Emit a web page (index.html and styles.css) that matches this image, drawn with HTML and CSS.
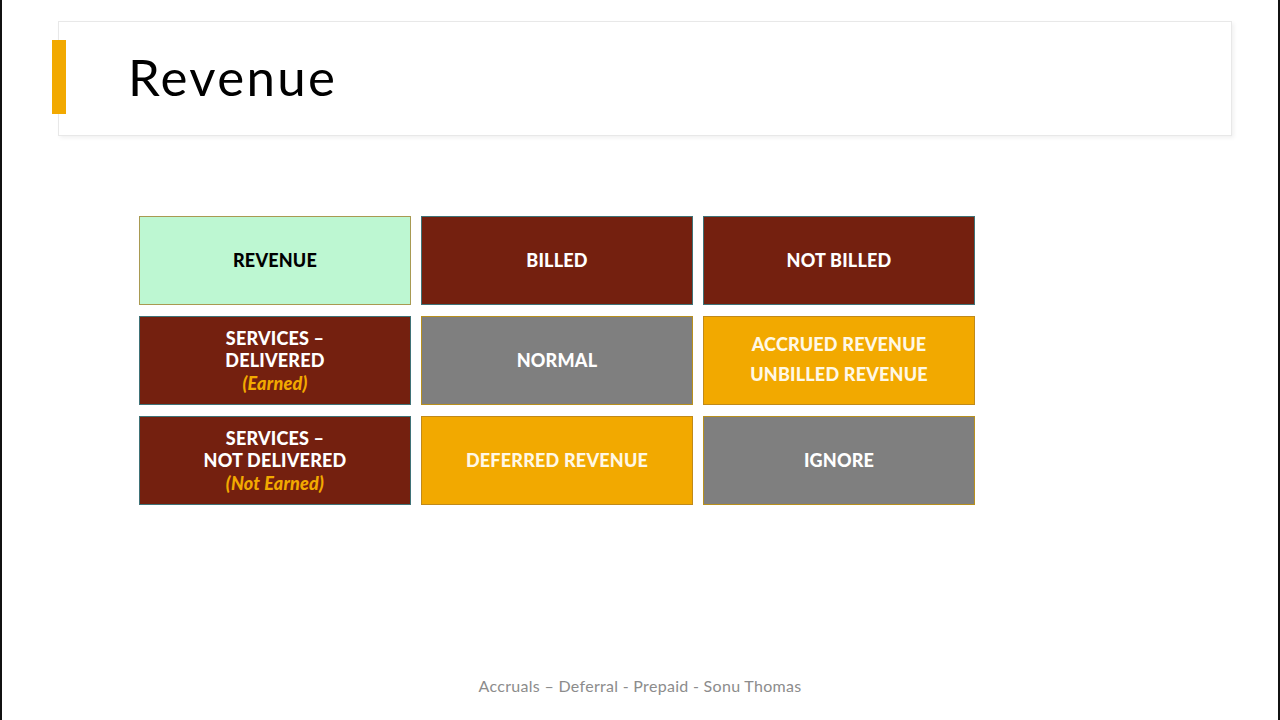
FILE: index.html
```html
<!DOCTYPE html>
<html lang="en">
<head>
<meta charset="utf-8">
<title>Revenue</title>
<link rel="stylesheet" href="styles.css">
</head>
<body>
<div class="slide">
  <header class="title-box">
    <span class="accent"></span>
    <h1 class="title">Revenue</h1>
  </header>
  <main class="matrix">
    <div class="cell green">REVENUE</div>
    <div class="cell brown">BILLED</div>
    <div class="cell brown">NOT BILLED</div>
    <div class="cell brown">SERVICES –<br>DELIVERED<br><em class="note">(Earned)</em></div>
    <div class="cell gray">NORMAL</div>
    <div class="cell orange spaced">ACCRUED REVENUE<br>UNBILLED REVENUE</div>
    <div class="cell brown">SERVICES –<br>NOT DELIVERED<br><em class="note">(Not Earned)</em></div>
    <div class="cell orange">DEFERRED REVENUE</div>
    <div class="cell gray">IGNORE</div>
  </main>
  <footer class="footer">Accruals – Deferral - Prepaid - Sonu Thomas</footer>
</div>
</body>
</html>
```

FILE: styles.css
```css
* { box-sizing: border-box; }
html, body { margin: 0; padding: 0; }
body {
  width: 1280px;
  height: 720px;
  background: #fff;
  font-family: "Lato", "Open Sans", sans-serif;
  overflow: hidden;
}
.slide {
  width: 1280px;
  height: 720px;
  border-left: 2px solid #111;
  border-right: 2px solid #111;
  display: flex;
  flex-direction: column;
  position: relative;
}
.title-box {
  position: relative;
  margin: 21px 0 0 56px;
  width: 1174px;
  height: 115px;
  border: 1px solid #e8e8e8;
  box-shadow: 2px 2px 4px rgba(0,0,0,0.06);
  display: flex;
  align-items: center;
  padding-left: 69px;
}
.accent {
  position: absolute;
  left: -7px;
  top: 18px;
  width: 14px;
  height: 74px;
  background: #f2a900;
}
.title {
  margin: 0;
  font-weight: 400;
  font-size: 51px;
  letter-spacing: 2.3px;
  color: #000;
  line-height: 1;
  padding-bottom: 4px;
}
.matrix {
  margin: 80px 0 0 137px;
  display: grid;
  grid-template-columns: 272px 272px 272px;
  grid-auto-rows: 89px;
  column-gap: 10px;
  row-gap: 11px;
}
.cell {
  display: flex;
  align-items: center;
  justify-content: center;
  flex-direction: column;
  text-align: center;
  font-weight: 900;
  font-size: 18px;
  letter-spacing: 0.2px;
  line-height: 22.5px;
  color: #fff;
  border: 1.5px solid #c8901a;
}
.green { background: #bdf7d2; color: #000; border-color: #a89a52; }
.brown { background: #74200f; border-color: #3f7277; }
.gray { background: #7f7f7f; border-color: #b8901e; }
.orange { background: #f2a900; border-color: #c08a1a; color: #fff8e6; }
.spaced { line-height: 30px; padding-bottom: 4px; }
.note {
  display: contents;
  color: #f2a900;
  font-style: italic;
}
.footer {
  margin-top: auto;
  margin-bottom: 25px;
  text-align: center;
  font-size: 16px;
  letter-spacing: 0.3px;
  color: #8c8c8c;
  padding-left: 0;
}
```
